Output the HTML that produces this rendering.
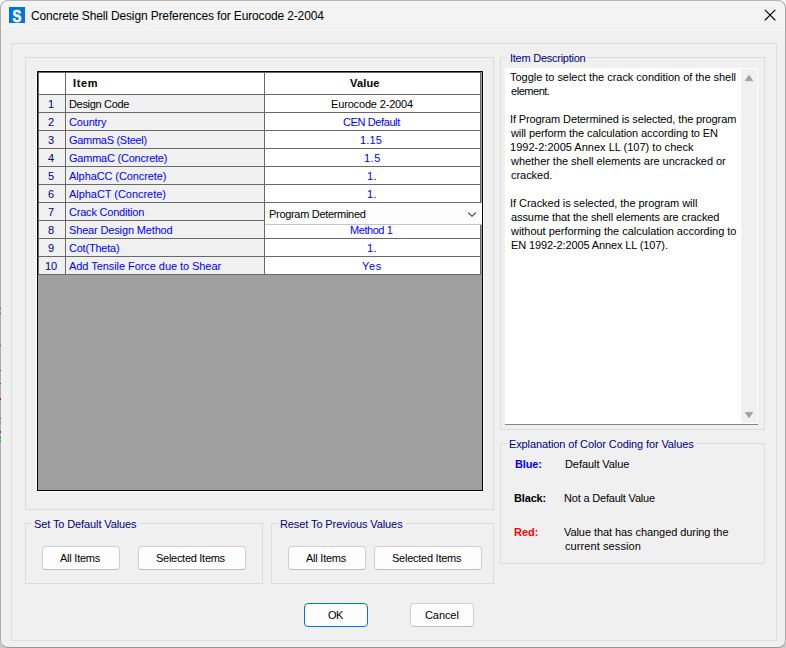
<!DOCTYPE html>
<html>
<head>
<meta charset="utf-8">
<title>Concrete Shell Design Preferences for Eurocode 2-2004</title>
<style>
html,body{margin:0;padding:0;}
body{width:786px;height:648px;overflow:hidden;position:relative;background:linear-gradient(#ffffff 0,#ffffff 50%,#c9c9c9 50%,#c9c9c9 100%);font-family:"Liberation Sans",sans-serif;font-size:11px;color:#000;}
.abs{position:absolute;box-sizing:border-box;}
#win{left:0;top:0;width:786px;height:648px;background:#f0f0f0;border-radius:8px;overflow:hidden;}
#frame{left:0;top:0;width:786px;height:648px;border:1px solid #a6a6a6;border-color:#b5b5b5 #a6a6a6 #979797 #ababab;border-radius:8px;pointer-events:none;}
#tbar{left:0;top:0;width:786px;height:31px;background:#f3f3f3;}
#icon{left:9px;top:7px;width:16px;height:16px;background:#0374dc;overflow:hidden;}
#icon span{position:absolute;left:-2.5px;top:0px;width:20px;height:18px;color:#fff;font-weight:bold;font-size:16.5px;line-height:18px;text-align:center;transform:scaleX(0.8);-webkit-text-stroke:0.6px #fff;}
.gb{border:1px solid #dcdcdc;}
.gl{background:#f0f0f0;height:13px;}
.btn{background:#fdfdfd;border:1px solid #d0d0d0;border-bottom-color:#bdbdbd;border-radius:4px;height:24px;}
.t{position:absolute;white-space:nowrap;line-height:13px;height:13px;}
.hl{background:#696969;height:1px;}
.vl{background:#696969;width:1px;}
.c{height:17px;}
.row{left:0;width:444px;}
.num{left:1px;top:0;width:26px;background:#f0f0f0;}
.itm{left:28px;top:0;width:198px;background:#f0f0f0;}
.val{left:227px;top:0;width:215px;background:#fff;}
.combo{background:#fcfcfc;border-bottom:1px solid #c4c4c4;z-index:2;}
#desc{left:505px;top:68px;width:253px;height:357px;background:#fff;border-bottom:1px solid #838383;}
</style>
</head>
<body>
<div id="win" class="abs">
<div id="tbar" class="abs">
<div id="icon" class="abs"><span>S</span></div>
<span class="t" style="left:31px;top:8px;letter-spacing:-0.14px;font-size:12px;line-height:16px;height:16px;">Concrete Shell Design Preferences for Eurocode 2-2004</span>
<svg class="abs" style="left:764px;top:9px" width="12" height="12" viewBox="0 0 12 12"><path d="M1.2 1.2 L11 11 M11 1.2 L1.2 11" stroke="#000" stroke-width="1.15" stroke-linecap="round" fill="none"/></svg>
</div>
<div class="abs gb" style="left:11px;top:43px;width:766px;height:598px;">
</div>
<div class="abs gb" style="left:25px;top:57px;width:469px;height:453px;">
</div>
<div class="abs" style="left:36px;top:70px;width:448px;height:422px;background:#000;border:1px solid #fff;">
<div id="grid" class="abs" style="left:1px;top:1px;width:444px;height:418px;background:#a0a0a0;">
<div class="abs" style="left:0;top:0;width:443px;height:203px;background:#fff;"></div>
<div class="abs row" style="top:1px;height:21px;">
<div class="abs" style="left:28px;top:0;width:198px;height:21px;"><span class="t" style="left:7px;top:4px;letter-spacing:0.60px;font-weight:bold;">Item</span></div>
<div class="abs" style="left:227px;top:0;width:215px;height:21px;"><span class="t" style="left:85px;top:4px;letter-spacing:0.18px;font-weight:bold;">Value</span></div>
</div>
<div class="abs row" style="top:23px;height:17px;">
<div class="abs c num"><span class="t" style="left:9px;top:3px;color:#000080;">1</span></div>
<div class="abs c itm"><span class="t" style="left:3px;top:3px;letter-spacing:-0.32px;">Design Code</span></div>
<div class="abs c val"><span class="t" style="left:66px;top:3px;letter-spacing:-0.16px;">Eurocode 2-2004</span></div>
</div>
<div class="abs row" style="top:41px;height:17px;">
<div class="abs c num"><span class="t" style="left:9px;top:3px;color:#000080;">2</span></div>
<div class="abs c itm"><span class="t" style="left:3px;top:3px;letter-spacing:-0.17px;color:#0000ff;">Country</span></div>
<div class="abs c val"><span class="t" style="left:78px;top:3px;letter-spacing:-0.39px;color:#0000ff;">CEN Default</span></div>
</div>
<div class="abs row" style="top:59px;height:17px;">
<div class="abs c num"><span class="t" style="left:9px;top:3px;color:#000080;">3</span></div>
<div class="abs c itm"><span class="t" style="left:3px;top:3px;letter-spacing:-0.29px;color:#0000ff;">GammaS (Steel)</span></div>
<div class="abs c val"><span class="t" style="left:95px;top:3px;letter-spacing:0.17px;color:#0000ff;">1.15</span></div>
</div>
<div class="abs row" style="top:77px;height:17px;">
<div class="abs c num"><span class="t" style="left:9px;top:3px;color:#000080;">4</span></div>
<div class="abs c itm"><span class="t" style="left:3px;top:3px;letter-spacing:-0.23px;color:#0000ff;">GammaC (Concrete)</span></div>
<div class="abs c val"><span class="t" style="left:99px;top:3px;letter-spacing:0.50px;color:#0000ff;">1.5</span></div>
</div>
<div class="abs row" style="top:95px;height:17px;">
<div class="abs c num"><span class="t" style="left:9px;top:3px;color:#000080;">5</span></div>
<div class="abs c itm"><span class="t" style="left:3px;top:3px;letter-spacing:-0.09px;color:#0000ff;">AlphaCC (Concrete)</span></div>
<div class="abs c val"><span class="t" style="left:102px;top:3px;letter-spacing:0.30px;color:#0000ff;">1.</span></div>
</div>
<div class="abs row" style="top:113px;height:17px;">
<div class="abs c num"><span class="t" style="left:9px;top:3px;color:#000080;">6</span></div>
<div class="abs c itm"><span class="t" style="left:3px;top:3px;letter-spacing:-0.04px;color:#0000ff;">AlphaCT (Concrete)</span></div>
<div class="abs c val"><span class="t" style="left:102px;top:3px;letter-spacing:0.30px;color:#0000ff;">1.</span></div>
</div>
<div class="abs row" style="top:131px;height:17px;">
<div class="abs c num"><span class="t" style="left:9px;top:3px;color:#000080;">7</span></div>
<div class="abs c itm"><span class="t" style="left:3px;top:3px;letter-spacing:-0.21px;color:#0000ff;">Crack Condition</span></div>
<div class="abs combo" style="left:227px;top:0;width:217px;height:22px;"><span class="t" style="left:4px;top:5px;letter-spacing:-0.31px;">Program Determined</span><svg class="abs" style="left:202px;top:8px" width="10" height="7" viewBox="0 0 10 7"><path d="M1.2 1.6 L5 5.3 L8.8 1.6" stroke="#333" stroke-width="1.1" fill="none"/></svg></div>
</div>
<div class="abs row" style="top:149px;height:17px;">
<div class="abs c num"><span class="t" style="left:9px;top:3px;color:#000080;">8</span></div>
<div class="abs c itm"><span class="t" style="left:3px;top:3px;letter-spacing:-0.15px;color:#0000ff;">Shear Design Method</span></div>
<div class="abs c val"><span class="t" style="left:85px;top:3px;letter-spacing:-0.44px;color:#0000ff;">Method 1</span></div>
</div>
<div class="abs row" style="top:167px;height:17px;">
<div class="abs c num"><span class="t" style="left:9px;top:3px;color:#000080;">9</span></div>
<div class="abs c itm"><span class="t" style="left:3px;top:3px;letter-spacing:-0.22px;color:#0000ff;">Cot(Theta)</span></div>
<div class="abs c val"><span class="t" style="left:102px;top:3px;letter-spacing:0.30px;color:#0000ff;">1.</span></div>
</div>
<div class="abs row" style="top:185px;height:17px;">
<div class="abs c num"><span class="t" style="left:6px;top:3px;color:#000080;">10</span></div>
<div class="abs c itm"><span class="t" style="left:3px;top:3px;letter-spacing:-0.06px;color:#0000ff;">Add Tensile Force due to Shear</span></div>
<div class="abs c val"><span class="t" style="left:97px;top:3px;letter-spacing:0.60px;color:#0000ff;">Yes</span></div>
</div>
<div class="abs hl" style="left:0;top:0;width:443px;"></div>
<div class="abs hl" style="left:0;top:22px;width:443px;"></div>
<div class="abs hl" style="left:0;top:40px;width:443px;"></div>
<div class="abs hl" style="left:0;top:58px;width:443px;"></div>
<div class="abs hl" style="left:0;top:76px;width:443px;"></div>
<div class="abs hl" style="left:0;top:94px;width:443px;"></div>
<div class="abs hl" style="left:0;top:112px;width:443px;"></div>
<div class="abs hl" style="left:0;top:130px;width:443px;"></div>
<div class="abs hl" style="left:0;top:148px;width:227px;"></div>
<div class="abs hl" style="left:0;top:166px;width:443px;"></div>
<div class="abs hl" style="left:0;top:184px;width:443px;"></div>
<div class="abs hl" style="left:0;top:202px;width:443px;"></div>
<div class="abs vl" style="left:0px;top:0;height:203px;"></div>
<div class="abs vl" style="left:27px;top:0;height:203px;"></div>
<div class="abs vl" style="left:226px;top:0;height:203px;"></div>
<div class="abs vl" style="left:442px;top:0;height:131px;"></div>
<div class="abs vl" style="left:442px;top:153px;height:50px;"></div>
</div></div>
<div class="abs gb" style="left:500px;top:57px;width:265px;height:373px;">
<div class="abs gl" style="left:6px;top:-7px;width:80px;"><span class="t" style="left:3px;top:1px;letter-spacing:-0.25px;color:#000080;">Item Description</span></div>
</div>
<div id="desc" class="abs">
<div class="t" style="left:5px;top:3px;letter-spacing:-0.03px;">Toggle to select the crack condition of the shell</div>
<div class="t" style="left:6px;top:17px;letter-spacing:-0.46px;">element.</div>
<div class="t" style="left:5px;top:45px;letter-spacing:-0.12px;">If Program Determined is selected, the program</div>
<div class="t" style="left:6px;top:59px;letter-spacing:-0.09px;">will perform the calculation according to EN</div>
<div class="t" style="left:5px;top:73px;letter-spacing:0.01px;">1992-2:2005 Annex LL (107) to check</div>
<div class="t" style="left:6px;top:87px;letter-spacing:-0.04px;">whether the shell elements are uncracked or</div>
<div class="t" style="left:6px;top:101px;letter-spacing:-0.04px;">cracked.</div>
<div class="t" style="left:5px;top:129px;letter-spacing:-0.04px;">If Cracked is selected, the program will</div>
<div class="t" style="left:6px;top:143px;letter-spacing:-0.09px;">assume that the shell elements are cracked</div>
<div class="t" style="left:6px;top:157px;letter-spacing:-0.03px;">without performing the calculation according to</div>
<div class="t" style="left:6px;top:171px;letter-spacing:-0.12px;">EN 1992-2:2005 Annex LL (107).</div>
<div class="abs" style="left:236px;top:1px;width:16px;height:354px;background:#f0f0f0;">
<svg class="abs" style="left:3px;top:5px" width="10" height="8" viewBox="0 0 10 8"><path d="M1.3 6.7 L5 1.2 L8.7 6.7 Z" fill="#a0a0a0" stroke="#a0a0a0" stroke-width="0.8" stroke-linejoin="round"/></svg>
<svg class="abs" style="left:3px;top:342px" width="10" height="8" viewBox="0 0 10 8"><path d="M1.3 1.4 L5 6.8 L8.7 1.4 Z" fill="#a0a0a0" stroke="#a0a0a0" stroke-width="0.8" stroke-linejoin="round"/></svg>
</div></div>
<div class="abs gb" style="left:500px;top:443px;width:265px;height:121px;">
<div class="abs gl" style="left:6px;top:-7px;width:189px;"><span class="t" style="left:2px;top:1px;letter-spacing:-0.11px;color:#000080;">Explanation of Color Coding for Values</span></div>
</div>
<div class="t" style="left:515px;top:458px;letter-spacing:-0.12px;color:#0000ff;font-weight:bold;">Blue:</div>
<div class="t" style="left:565px;top:458px;letter-spacing:-0.07px;">Default Value</div>
<div class="t" style="left:514px;top:492px;letter-spacing:-0.16px;font-weight:bold;">Black:</div>
<div class="t" style="left:564px;top:492px;letter-spacing:-0.19px;">Not a Default Value</div>
<div class="t" style="left:514px;top:526px;color:#ff0000;font-weight:bold;">Red:</div>
<div class="t" style="left:564px;top:526px;letter-spacing:-0.07px;">Value that has changed during the</div>
<div class="t" style="left:565px;top:540px;letter-spacing:0.09px;">current session</div>
<div class="abs gb" style="left:25px;top:523px;width:238px;height:61px;">
<div class="abs gl" style="left:6px;top:-7px;width:107px;"><span class="t" style="left:2px;top:1px;letter-spacing:-0.11px;color:#000080;">Set To Default Values</span></div>
</div>
<div class="abs gb" style="left:271px;top:523px;width:223px;height:61px;">
<div class="abs gl" style="left:6px;top:-7px;width:127px;"><span class="t" style="left:2px;top:1px;letter-spacing:-0.10px;color:#000080;">Reset To Previous Values</span></div>
</div>
<div class="abs btn" style="left:42px;top:546px;width:78px;"><span class="t" style="left:17px;top:5px;letter-spacing:-0.24px;">All Items</span></div>
<div class="abs btn" style="left:138px;top:546px;width:108px;"><span class="t" style="left:17px;top:5px;letter-spacing:-0.28px;">Selected Items</span></div>
<div class="abs btn" style="left:288px;top:546px;width:78px;"><span class="t" style="left:17px;top:5px;letter-spacing:-0.24px;">All Items</span></div>
<div class="abs btn" style="left:374px;top:546px;width:108px;"><span class="t" style="left:17px;top:5px;letter-spacing:-0.25px;">Selected Items</span></div>
<div class="abs btn" style="left:304px;top:603px;width:64px;border-color:#0078d4;"><span class="t" style="left:23px;top:5px;letter-spacing:-0.60px;">OK</span></div>
<div class="abs btn" style="left:410px;top:603px;width:64px;"><span class="t" style="left:14px;top:5px;letter-spacing:-0.08px;">Cancel</span></div>
</div>
<div id="frame" class="abs"></div>
<div class="abs" style="left:0;top:308px;width:1px;height:1px;background:#8e4040;"></div>
<div class="abs" style="left:0;top:313px;width:1px;height:1px;background:#8e4040;"></div>
<div class="abs" style="left:0;top:345px;width:1px;height:1px;background:#8e4040;"></div>
<div class="abs" style="left:0;top:370px;width:1px;height:1px;background:#8e4040;"></div>
<div class="abs" style="left:0;top:383px;width:1px;height:1px;background:#8e4040;"></div>
<div class="abs" style="left:0;top:398px;width:1px;height:1px;background:#8e3030;"></div>
<div class="abs" style="left:0;top:399px;width:1px;height:1px;background:#8e3030;"></div>
<div class="abs" style="left:0;top:418px;width:1px;height:1px;background:#8e4040;"></div>
<div class="abs" style="left:0;top:422px;width:1px;height:1px;background:#30c030;"></div>
<div class="abs" style="left:0;top:431px;width:1px;height:1px;background:#8e3030;"></div>
<div class="abs" style="left:0;top:432px;width:1px;height:1px;background:#8e3030;"></div>
<div class="abs" style="left:0;top:436px;width:1px;height:1px;background:#30c030;"></div>
<div class="abs" style="left:0;top:437px;width:1px;height:1px;background:#30c030;"></div>
<div class="abs" style="left:0;top:438px;width:1px;height:1px;background:#30c030;"></div>
<div class="abs" style="left:0;top:440px;width:1px;height:1px;background:#30c030;"></div>
<div class="abs" style="left:0;top:441px;width:1px;height:1px;background:#30c030;"></div>
</body>
</html>
